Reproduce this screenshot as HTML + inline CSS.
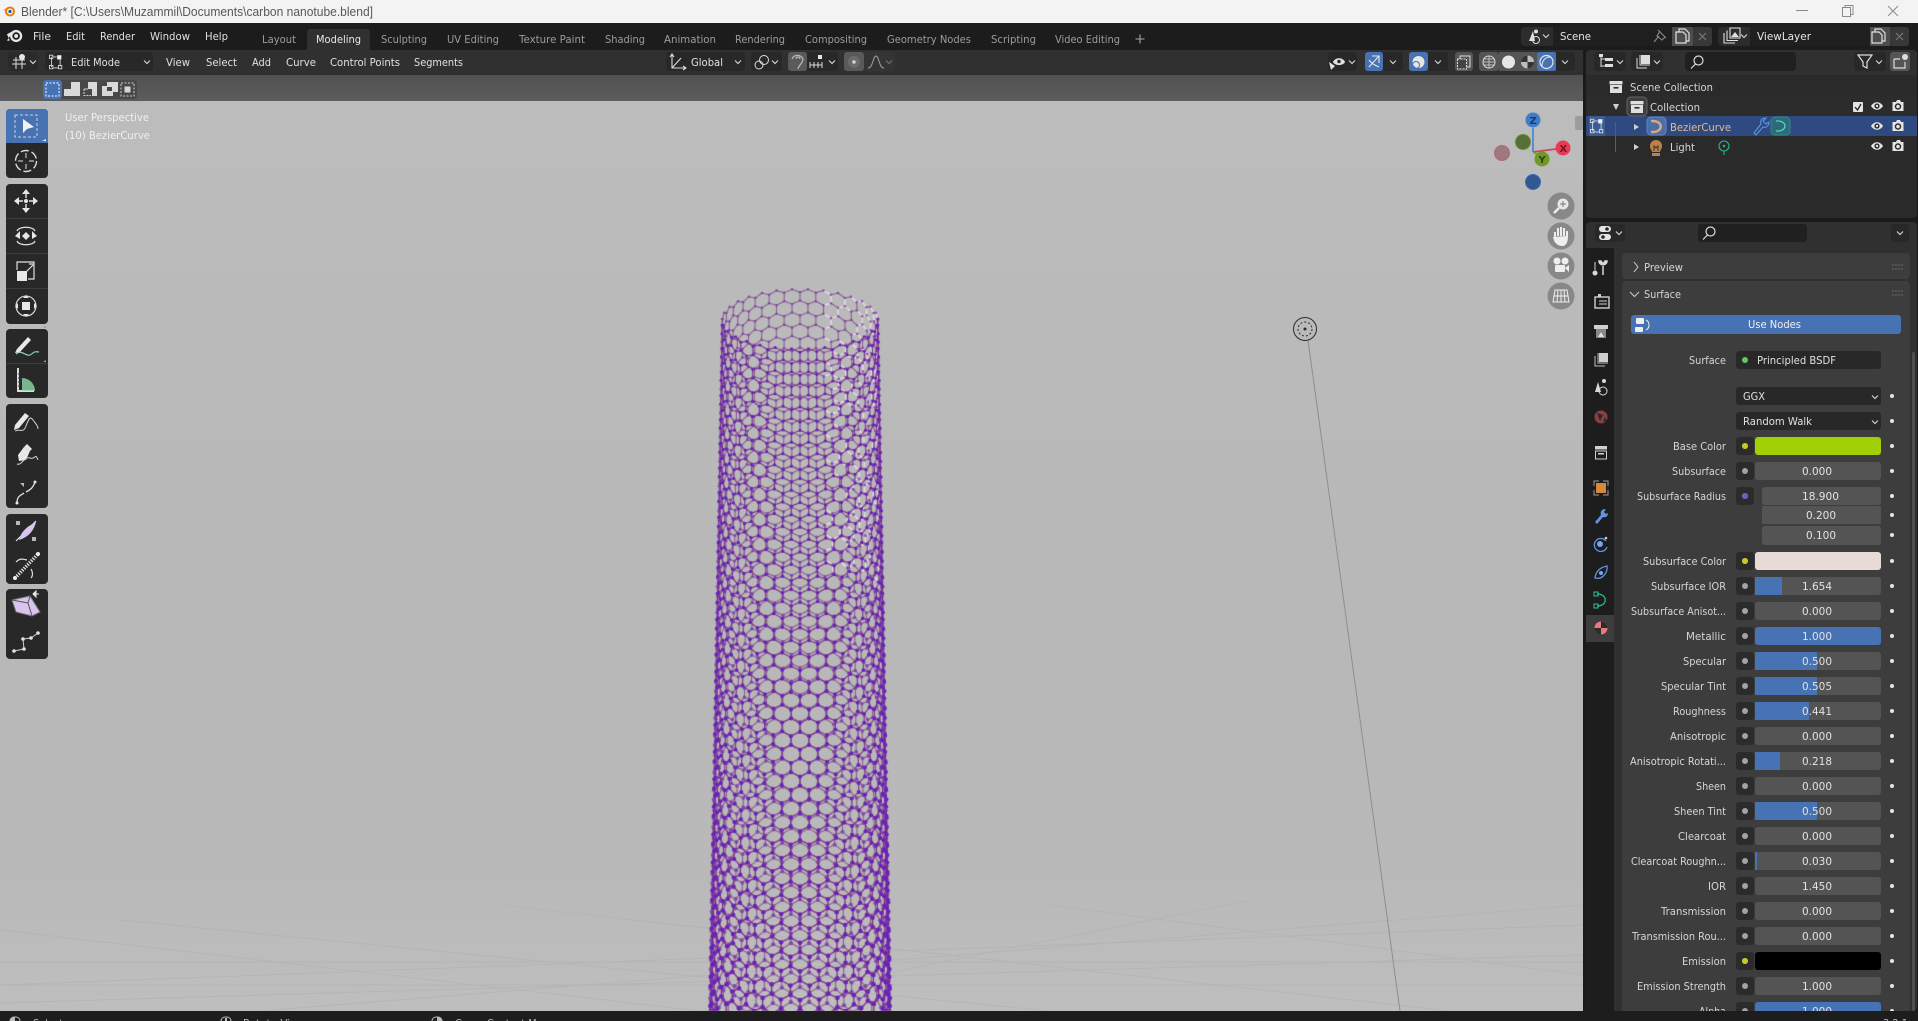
<!DOCTYPE html>
<html><head><meta charset="utf-8"><title>Blender</title>
<style>
html,body{margin:0;padding:0;background:#1d1d1d;width:1918px;height:1021px;overflow:hidden}
svg,canvas{position:absolute;left:0;top:0;display:block}
text{font-family:"DejaVu Sans","Liberation Sans",sans-serif;font-size:10.5px;fill:#d6d6d6}
.m{fill:#e0e0e0}.tab{fill:#9c9c9c}.v{fill:#e2e2e2;text-anchor:start}
.ic{fill:none;stroke:#e0e0e0;stroke-width:1.2}
.w{fill:#e6e6e6}
</style></head><body>
<svg width="1918" height="1021" viewBox="0 0 1918 1021">
<defs>
<linearGradient id="vp" x1="0" y1="0" x2="0" y2="1"><stop offset="0" stop-color="#bcbcbc"/><stop offset=".55" stop-color="#b8b8b8"/><stop offset=".85" stop-color="#b9b9b9"/><stop offset="1" stop-color="#bebebe"/></linearGradient>
<path id="chev" d="M-3-1.5 0 1.5 3-1.5" fill="none" stroke="#cfcfcf" stroke-width="1.2"/>
<g id="eye"><path d="M-6 0C-3-5 3-5 6 0 3 5-3 5-6 0Z" fill="#e4e4e4"/><circle r="2.6" fill="#2a2a2a"/><circle r="1.2" fill="#e4e4e4"/></g>
<g id="cam"><path d="M-5.5-4H-2L-1-6H2L3-4H5.5V5H-5.5Z" fill="#e4e4e4"/><circle cy=".5" r="3.2" fill="#2a2a2a"/><circle cy=".5" r="1.8" fill="#e4e4e4"/></g>
<g id="sk"><rect x="1736" y="-9" width="18" height="18" rx="3" fill="#2b2b2b"/><circle cx="1745" r="3" fill="#a3a3a3"/><circle cx="1892" r="2" fill="#e6e6e6"/></g>
<g id="sl"><use href="#sk"/><rect x="1755" y="-9" width="126" height="18" rx="3" fill="#545454"/></g>
<g id="dots" fill="#777"><circle cx="0" cy="-2" r=".7"/><circle cx="3" cy="-2" r=".7"/><circle cx="6" cy="-2" r=".7"/><circle cx="9" cy="-2" r=".7"/><circle cx="0" cy="2" r=".7"/><circle cx="3" cy="2" r=".7"/><circle cx="6" cy="2" r=".7"/><circle cx="9" cy="2" r=".7"/></g>
<g id="coll"><rect x="-6.5" y="-6" width="13" height="3.4" fill="#e0e0e0"/><path d="M-6-2H6V6H-6Z" fill="#e0e0e0"/><rect x="-2.5" y="0" width="5" height="1.6" fill="#2a2a2a"/></g>
<g id="cmode" fill="none" stroke="#dcdcdc" stroke-width="1"><path d="M-4-6V6M-2 7H4M6-3V5M-2-6H2"/><rect x="2.5" y="-8" width="5" height="5" fill="#eee" stroke="none"/><rect x="-6.5" y="-8" width="4" height="4"/><rect x="-6.5" y="4" width="4" height="4"/><rect x="4" y="4" width="4" height="4"/></g>
<g id="curve" fill="none"><path d="M-3-6C7-6 7 6-3 6" stroke="#e0e0e0" stroke-width="1.4"/><rect x="-6" y="-8" width="4" height="4" stroke="#e0e0e0"/><rect x="-6" y="4" width="4" height="4" stroke="#e0e0e0"/></g>
<g id="mag" fill="none" stroke="#dcdcdc" stroke-width="1.2"><circle cx="1.5" cy="-1.5" r="4.5"/><path d="M-1.5 2-6 6.5"/></g>
</defs>

<!-- title bar -->
<rect width="1918" height="23" fill="#f3f3f3"/>
<g transform="translate(9,11.5)"><circle cx="1" cy="0" r="4" fill="none" stroke="#e87d0d" stroke-width="2"/><circle cx="1" r="1.6" fill="#265787"/><path d="M-6-1-1-4.5-2-1.5Z" fill="#e87d0d"/></g>
<text x="21" y="16" textLength="352" lengthAdjust="spacingAndGlyphs" style="font-family:'Liberation Sans',sans-serif;font-size:12.5px;fill:#585858">Blender* [C:\Users\Muzammil\Documents\carbon nanotube.blend]</text>
<path d="M1796 10.5H1808" stroke="#8a8a8a"/>
<path d="M1842.500 7.500h8v9h-8zM1845 7.500v-2h8v9h-2.500" fill="none" stroke="#8a8a8a"/>
<path d="M1888 6 1898 16M1898 6 1888 16" stroke="#8a8a8a"/>

<!-- top bar -->
<rect y="23" width="1918" height="27" fill="#1c1c1c"/>
<g transform="translate(15,36) scale(1.15)"><circle cx="1" cy="0" r="4.300" fill="none" stroke="#e6e6e6" stroke-width="2"/><circle cx="1" r="1.700" fill="#e6e6e6"/><path d="M-7-1.500-.5-5-1-2.500-5 1-7 4-4.500 4" fill="#e6e6e6"/></g>
<text class="m" x="33" y="40" textLength="18" lengthAdjust="spacingAndGlyphs">File</text>
<text class="m" x="66" y="40" textLength="19" lengthAdjust="spacingAndGlyphs">Edit</text>
<text class="m" x="100" y="40" textLength="35" lengthAdjust="spacingAndGlyphs">Render</text>
<text class="m" x="150" y="40" textLength="40" lengthAdjust="spacingAndGlyphs">Window</text>
<text class="m" x="205" y="40" textLength="23" lengthAdjust="spacingAndGlyphs">Help</text>
<path d="M307 50V32a3 3 0 0 1 3-3H367a3 3 0 0 1 3 3V50Z" fill="#303030"/>
<text class="tab" x="262" y="43" textLength="34" lengthAdjust="spacingAndGlyphs">Layout</text>
<text x="316" y="43" textLength="45" lengthAdjust="spacingAndGlyphs" style="fill:#e8e8e8">Modeling</text>
<text class="tab" x="381" y="43" textLength="46" lengthAdjust="spacingAndGlyphs">Sculpting</text>
<text class="tab" x="447" y="43" textLength="52" lengthAdjust="spacingAndGlyphs">UV Editing</text>
<text class="tab" x="519" y="43" textLength="66" lengthAdjust="spacingAndGlyphs">Texture Paint</text>
<text class="tab" x="605" y="43" textLength="40" lengthAdjust="spacingAndGlyphs">Shading</text>
<text class="tab" x="664" y="43" textLength="52" lengthAdjust="spacingAndGlyphs">Animation</text>
<text class="tab" x="735" y="43" textLength="50" lengthAdjust="spacingAndGlyphs">Rendering</text>
<text class="tab" x="805" y="43" textLength="62" lengthAdjust="spacingAndGlyphs">Compositing</text>
<text class="tab" x="887" y="43" textLength="84" lengthAdjust="spacingAndGlyphs">Geometry Nodes</text>
<text class="tab" x="991" y="43" textLength="45" lengthAdjust="spacingAndGlyphs">Scripting</text>
<text class="tab" x="1055" y="43" textLength="65" lengthAdjust="spacingAndGlyphs">Video Editing</text>
<path d="M1140 34.500V43.500M1135.500 39H1144.500" stroke="#a8a8a8" stroke-width="1.100"/>

<!-- scene selector -->
<rect x="1521" y="27" width="191" height="19" rx="4" fill="#2c2c2c"/>
<rect x="1553" y="27" width="119" height="19" fill="#1f1f1f"/>
<rect x="1672" y="27" width="21" height="19" fill="#4d4d4d"/>
<rect x="1693" y="27" width="19" height="19" rx="3" fill="#383838"/>
<path d="M1529 41 1533 31 1535 41Z" fill="#e0e0e0"/><circle cx="1536" cy="31.500" r="2" fill="#e0e0e0"/><circle cx="1536" cy="40" r="3.500" fill="none" stroke="#e0e0e0"/>
<use href="#chev" x="1546" y="36"/>
<text class="w" x="1560" y="40" textLength="31" lengthAdjust="spacingAndGlyphs">Scene</text>
<path d="M1654 42 1659 36M1658 30 1666 38M1660 31 1657 36 1662 40 1665 37" fill="none" stroke="#888" stroke-width="1.100"/>
<path d="M1679 32v-3h6l4 4v8h-3M1676 32h7l3 3v8h-10z" fill="none" stroke="#e0e0e0" stroke-width="1.200"/>
<path d="M1699 33 1706 40M1706 33 1699 40" stroke="#777" stroke-width="1.200"/>

<rect x="1718" y="27" width="191" height="19" rx="4" fill="#2c2c2c"/>
<rect x="1750" y="27" width="120" height="19" fill="#1f1f1f"/>
<rect x="1870" y="27" width="20" height="19" fill="#4d4d4d"/>
<rect x="1890" y="27" width="19" height="19" rx="3" fill="#383838"/>
<path d="M1724 33v10h11M1727 30.500v10h11M1730 28h10v10h-10z" fill="none" stroke="#e0e0e0" stroke-width="1.100"/><path d="M1731 37 1735 32 1739 37Z" fill="#e0e0e0"/>
<use href="#chev" x="1744" y="36"/>
<text class="w" x="1757" y="40" textLength="54" lengthAdjust="spacingAndGlyphs">ViewLayer</text>
<path d="M1875 32v-3h6l4 4v8h-3M1872 32h7l3 3v8h-10z" fill="none" stroke="#e0e0e0" stroke-width="1.200"/>
<path d="M1896 33 1903 40M1903 33 1896 40" stroke="#777" stroke-width="1.200"/>

<!-- 3D view -->
<rect y="101" width="1583" height="910" fill="url(#vp)"/>
<g stroke="#adadad" stroke-width="1" fill="none" opacity=".45">
<path d="M0 985 1583 925M0 1003 1583 955M260 1011 1583 905M700 1011 1250 900M0 930 700 1011M120 920 1050 1011M500 905 1450 1011M1050 905 1583 975"/>
<path d="M0 962H1583M0 985H1583"/>
</g>
<path d="M1308 340 1400 1011" stroke="#8e8e8e" stroke-width="1" fill="none"/>
<circle cx="1305" cy="329" r="11.500" fill="none" stroke="#2c2c2c" stroke-width="1"/>
<circle cx="1305" cy="329" r="7" fill="none" stroke="#2c2c2c" stroke-width="1" stroke-dasharray="2 2"/>
<circle cx="1305" cy="329" r="1.500" fill="#2c2c2c"/>

<text x="65" y="121" textLength="84" lengthAdjust="spacingAndGlyphs" style="fill:#f0f0f0">User Perspective</text>
<text x="65" y="139" textLength="85" lengthAdjust="spacingAndGlyphs" style="fill:#f0f0f0">(10) BezierCurve</text>

<!-- header 3D -->
<rect y="50" width="1583" height="25" fill="#303030"/>
<linearGradient id="ts" x1="0" y1="0" x2="0" y2="1"><stop offset="0" stop-color="#515151"/><stop offset="1" stop-color="#5c5c5c"/></linearGradient>
<rect y="75" width="1583" height="26" fill="url(#ts)"/>
<rect x="8" y="52" width="30" height="19" rx="4" fill="#2a2a2a"/>
<path d="M12 64H26M13 60H25M16 57V69M22 57V69" stroke="#dcdcdc"/><circle cx="22" cy="57" r="3" fill="#e6e6e6"/>
<use href="#chev" x="33" y="62"/>
<rect x="45" y="52" width="108" height="19" rx="4" fill="#282828"/>
<use href="#cmode" transform="translate(55,62) scale(.85)"/>
<text class="m" x="71" y="66" textLength="49" lengthAdjust="spacingAndGlyphs">Edit Mode</text>
<use href="#chev" x="147" y="62"/>
<text class="m" x="166" y="66" textLength="24" lengthAdjust="spacingAndGlyphs">View</text>
<text class="m" x="206" y="66" textLength="31" lengthAdjust="spacingAndGlyphs">Select</text>
<text class="m" x="252" y="66" textLength="19" lengthAdjust="spacingAndGlyphs">Add</text>
<text class="m" x="286" y="66" textLength="30" lengthAdjust="spacingAndGlyphs">Curve</text>
<text class="m" x="330" y="66" textLength="70" lengthAdjust="spacingAndGlyphs">Control Points</text>
<text class="m" x="414" y="66" textLength="49" lengthAdjust="spacingAndGlyphs">Segments</text>

<rect x="666" y="52" width="79" height="19" rx="4" fill="#282828"/>
<path d="M672 55V68H685M672 68 681 58M670 57 672 54 674 57M683 66 686 68 683 70" fill="none" stroke="#dcdcdc" stroke-width="1.100"/>
<text class="m" x="691" y="66" textLength="32" lengthAdjust="spacingAndGlyphs">Global</text>
<use href="#chev" x="738" y="62"/>
<rect x="751" y="52" width="31" height="19" rx="4" fill="#282828"/>
<circle cx="759" cy="65" r="4" fill="none" stroke="#dcdcdc"/><circle cx="764" cy="60" r="4.500" fill="none" stroke="#dcdcdc"/>
<use href="#chev" x="775" y="62"/>
<rect x="788" y="52" width="19" height="19" rx="3" fill="#5a5a5a"/>
<path d="M792 59a6 6 0 0 1 11 0c0 4-5 7-5 10M796 59a2 2 0 0 1 4 0" fill="none" stroke="#bcbcbc" stroke-width="1.200"/>
<rect x="807" y="52" width="31" height="19" rx="3" fill="#282828"/>
<path d="M810 62V68M814 62V68M818 62V68M822 62V68M810 65H822" stroke="#dcdcdc"/><rect x="818" y="55" width="4" height="4" fill="#e6e6e6"/>
<use href="#chev" x="832" y="62"/>
<rect x="844" y="52" width="20" height="19" rx="3" fill="#5a5a5a"/><circle cx="854" cy="62" r="6" fill="#6c6c6c"/><circle cx="854" cy="62" r="1.700" fill="#d8d8d8"/>
<rect x="864" y="52" width="31" height="19" rx="3" fill="#343434"/>
<path d="M868 68C873 68 873 56 876 56S879 68 884 68" fill="none" stroke="#9a9a9a" stroke-width="1.100"/>
<use href="#chev" x="889" y="62" opacity=".4"/>

<!-- select mode -->
<rect x="43" y="80" width="94" height="19" rx="3" fill="#484848"/>
<rect x="43" y="80" width="19" height="19" rx="3" fill="#4772b3"/>
<rect x="46" y="83" width="13" height="13" fill="none" stroke="#fff" stroke-dasharray="2 1.500"/>
<path d="M71 82H80V96H64V89H71Z" fill="#d8d8d8"/>
<path d="M88 82H97V96H92V89H88Z" fill="#d8d8d8"/><path d="M84 89V95.500H91" fill="none" stroke="#cfcfcf" stroke-dasharray="2 1"/><path d="M84 89H88" stroke="#cfcfcf"/>
<path d="M102 86H107V82H118V92H113V96H102ZM107 87V91H112V87Z" fill="#d8d8d8" fill-rule="evenodd"/>
<rect x="121" y="83" width="13" height="13" fill="none" stroke="#cfcfcf" stroke-dasharray="2 1.500"/><rect x="124.500" y="86.500" width="6" height="6" fill="#d8d8d8"/>

<!-- header right -->
<rect x="1328" y="52" width="29" height="19" rx="4" fill="#282828"/>
<path d="M1333 62C1335 57 1343 57 1345 62 1343 66 1335 66 1333 62Z" fill="#e0e0e0"/><circle cx="1339" cy="61.500" r="1.700" fill="#282828"/><path d="M1329 62 1335 66 1331 70Z" fill="#e0e0e0"/>
<use href="#chev" x="1352" y="62"/>
<rect x="1365" y="52" width="18" height="19" rx="3" fill="#4772b3"/>
<path d="M1369 67 1379 56M1372 56H1379V63M1369 60C1372 64 1375 65 1379 67" fill="none" stroke="#e8e8e8" stroke-width="1.100"/>
<rect x="1383" y="52" width="20" height="19" rx="3" fill="#282828"/><use href="#chev" x="1393" y="62"/>
<rect x="1409" y="52" width="19" height="19" rx="3" fill="#4772b3"/>
<circle cx="1418.500" cy="62" r="6" fill="#e6e6e6"/><circle cx="1416" cy="65" r="3.500" fill="none" stroke="#4772b3"/>
<rect x="1428" y="52" width="20" height="19" rx="3" fill="#282828"/><use href="#chev" x="1438" y="62"/>
<rect x="1455" y="52" width="18" height="19" rx="3" fill="#555"/>
<rect x="1460" y="56" width="10" height="11" fill="none" stroke="#dcdcdc"/><rect x="1457.500" y="59" width="9" height="10" fill="#444" stroke="#dcdcdc" stroke-dasharray="2 1"/>
<rect x="1479" y="52" width="96" height="19" rx="4" fill="#282828"/>
<rect x="1479" y="52" width="20" height="19" rx="3" fill="#555"/>
<circle cx="1489" cy="62" r="6" fill="none" stroke="#dcdcdc"/><path d="M1483 62H1495M1489 56V68M1484 59H1494M1484 65H1494" stroke="#dcdcdc" stroke-width=".7"/>
<rect x="1499" y="52" width="19" height="19" fill="#555"/><circle cx="1508.500" cy="62" r="6.500" fill="#e6e6e6"/>
<rect x="1518" y="52" width="19" height="19" fill="#555"/><circle cx="1527.500" cy="62" r="6.500" fill="#bdbdbd"/><path d="M1527.500 62H1534a6.500 6.500 0 0 1-6.500 6.500Z" fill="#333"/><path d="M1527.500 55.500V62H1521a6.500 6.500 0 0 1 6.500-6.500Z" fill="#333"/>
<rect x="1537" y="52" width="19" height="19" rx="2" fill="#4772b3"/><circle cx="1546.500" cy="62" r="6.500" fill="none" stroke="#e6e6e6" stroke-width="1.200"/><path d="M1542 66C1542 60 1546 57 1550 57" stroke="#e6e6e6" fill="none"/>
<use href="#chev" x="1565" y="62"/>

<!-- toolbar -->
<g>
<rect x="6" y="109" width="42" height="69" rx="4" fill="#282828"/>
<path d="M6 143V113a4 4 0 0 1 4-4H44a4 4 0 0 1 4 4V143Z" fill="#4772b3"/>
<rect x="15" y="115" width="22" height="22" fill="none" stroke="#e8e8e8" stroke-dasharray="3 2" opacity=".8"/>
<path d="M23 119V133L27 129 34 127Z" fill="#f2f2f2"/>
<path d="M46 139 42 141H46Z" fill="#cfe"/>
<circle cx="26" cy="161" r="10.500" fill="none" stroke="#e8d8d8" stroke-width="1.400" stroke-dasharray="8 3"/>
<path d="M26 153V158M26 164V169M18 161H23M29 161H34" stroke="#e0e0e0"/>

<rect x="6" y="184" width="42" height="140" rx="4" fill="#282828"/>
<path d="M6 218.500H48M6 253.500H48M6 288.500H48M6 363.500H48M6 438.500H48M6 473.500H48M6 548.500H48M6 623.500H48" stroke="#3c3c3c"/>
<g fill="#e6e6e6"><path d="M26 189 30 194H22ZM26 213 22 208H30ZM14 201 19 197V205ZM38 201 33 197V205Z"/><circle cx="26" cy="201" r="2"/><path d="M25.300 194H26.700V198H25.300ZM25.300 204H26.700V208H25.300ZM19 200.300H23V201.700H19ZM29 200.300H33V201.700H29Z"/></g>
<path d="M17 231C19 226 33 226 35 231M17 241C19 246 33 246 35 241" fill="none" stroke="#e0e0e0" stroke-width="1.300"/>
<path d="M15 236 20 231 20 239ZM37 236 32 231 32 239Z" fill="#e6e6e6"/><path d="M26 232 30 236 26 240 22 236Z" fill="#e6e6e6"/>
<rect x="17" y="271" width="10" height="10" fill="#e8e8e8"/><path d="M17 270V262H34V279H28M26 272 33 265M29 264H34V269" fill="none" stroke="#e0e0e0" stroke-width="1.200"/>
<circle cx="26" cy="306" r="10" fill="none" stroke="#e0e0e0" stroke-width="1.100"/><rect x="22" y="302" width="8" height="8" fill="#e8e8e8"/><path d="M26 295 29 298H23ZM26 317 23 314H29ZM15 306 18 303V309ZM37 306 34 303V309Z" fill="#e6e6e6"/>

<rect x="6" y="329" width="42" height="69" rx="4" fill="#282828"/>
<path d="M6 363.500H48" stroke="#3c3c3c"/>
<path d="M17 349 28 337 31 340 20 352 15 353Z" fill="#e8e8e8"/>
<path d="M16 354C22 349 26 357 30 355S33 351 39 352" fill="none" stroke="#8fd0b0" stroke-width="1.200"/>
<path d="M46 360 43 362H46ZM46 326 43 328H46Z" fill="#999"/>
<path d="M18 368V391H34" fill="none" stroke="#ddd" stroke-width="2"/><path d="M18 374H21M18 378H21M18 382H21M18 386H21" stroke="#333"/>
<path d="M22 391V378A13 13 0 0 1 35 391Z" fill="#8fd8a8" opacity=".8"/>

<rect x="6" y="404" width="42" height="104" rx="4" fill="#282828"/>
<path d="M15 425 25 413 29 416 19 428 14 430Z" fill="#e8e8e8"/>
<path d="M15 431C20 428 23 434 26 426S30 416 33 420 38 426 38 429" fill="none" stroke="#cfd8d0" stroke-width="1"/>
<path d="M18 455 24 447 30 451 26 460 19 461Z" fill="#e8e8e8"/><path d="M24 447 27 444 32 449 30 451" fill="#e8e8e8"/>
<path d="M17 464C22 466 24 456 30 458S35 452 38 460" fill="none" stroke="#cfd8d0" stroke-width="1"/>
<path d="M17 503C17 495 22 495 24 493M26 492C30 490 33 488 35 482" fill="none" stroke="#e0e0e0" stroke-width="1.300"/><circle cx="17" cy="503" r="1.500" fill="#e8e8e8"/><circle cx="35" cy="482" r="1.500" fill="#cfe8d8"/><path d="M20 483 24 483 24 487Z" fill="#8fd0b0"/>

<rect x="6" y="514" width="42" height="70" rx="4" fill="#282828"/>
<path d="M16 541 36 521" stroke="#e0e0e0" stroke-width="1.200"/><path d="M19 540C21 532 26 527 36 522 34 530 29 537 19 540Z" fill="#d8c4ee"/>
<rect x="16" y="521" width="4" height="4" fill="#b8b8b8"/><rect x="32" y="537" width="4" height="4" fill="#b8b8b8"/>
<path d="M15 578 38 554" stroke="#e8e8e8" stroke-width="3.500" stroke-dasharray="1.300 1.300"/><circle cx="15" cy="578" r="2" fill="#eee"/><circle cx="38" cy="554" r="2" fill="#eee"/>
<path d="M16 562C20 558 23 559 27 560M31 569C33 572 33 576 31 578" fill="none" stroke="#ddd" stroke-width="1.200"/>

<rect x="6" y="589" width="42" height="70" rx="4" fill="#282828"/>
<path d="M12 600 30 596 40 612 32 616 16 612Z" fill="#d8c4ee" stroke="#777"/><path d="M30 596 28 603 32 616M12 600 28 603" stroke="#555" fill="none"/>
<path d="M33 594H39M33 594 36 591V597Z" stroke="#e8e8e8" fill="#e8e8e8"/>
<path d="M14 651 24 649 23 639 31 638 38 633" fill="none" stroke="#cfcfcf" stroke-width="1"/>
<g fill="#e2e2e2"><circle cx="14" cy="651" r="1.800"/><circle cx="24" cy="649" r="1.800"/><circle cx="23" cy="639" r="1.800"/><circle cx="31" cy="638" r="1.800"/><circle cx="38" cy="633" r="1.800"/></g>
</g>

<!-- gizmo -->
<path d="M1533 152V128" stroke="#4a8ad4" stroke-width="1.800"/>
<path d="M1533 152 1556 149" stroke="#c8485a" stroke-width="1.800"/>
<path d="M1533 152 1540 156" stroke="#7da02e" stroke-width="1.800"/>
<circle cx="1533" cy="182" r="7.500" fill="#30588f" stroke="#3d6eaa"/>
<circle cx="1502" cy="153" r="7.500" fill="#a0787f" stroke="#b06a78"/>
<circle cx="1523" cy="142" r="7.500" fill="#576f36" stroke="#6c8c30"/>
<circle cx="1533" cy="120" r="7.500" fill="#3f7dcb"/>
<circle cx="1563" cy="148" r="7.500" fill="#e83a53"/>
<circle cx="1542" cy="159" r="7.500" fill="#6f9a26"/>
<text x="1529.500" y="124" style="font-size:10px;fill:#173a66;font-weight:bold">Z</text>
<text x="1559.500" y="152" style="font-size:10px;fill:#701822;font-weight:bold">X</text>
<text x="1538.500" y="163" style="font-size:10px;fill:#2f4610;font-weight:bold">Y</text>

<rect x="1575" y="116" width="8" height="14" rx="2" fill="#9c9c9c"/>
<g fill="#888">
<circle cx="1561" cy="206" r="13.500"/><circle cx="1561" cy="236" r="13.500"/><circle cx="1561" cy="266" r="13.500"/><circle cx="1561" cy="296" r="13.500"/>
</g>
<circle cx="1563" cy="204" r="5.500" fill="#e8e8e8"/><path d="M1563 201V207M1560 204H1566" stroke="#777"/><path d="M1559 208 1554 213" stroke="#eee" stroke-width="2.500"/>
<path d="M1555 238V232M1558 236V228M1561 236V227M1564 236V228M1567 237V231M1554 237C1555 243 1559 245 1562 245 1566 245 1567 241 1567 236" fill="#eee" stroke="#eee" stroke-width="2"/>
<circle cx="1557" cy="261" r="3.500" fill="#eee"/><circle cx="1565" cy="261" r="3.500" fill="#eee"/><rect x="1555" y="265" width="10" height="7" rx="1" fill="#eee"/><path d="M1565 268 1569 265V272Z" fill="#eee"/>
<path d="M1555 290H1567L1569 302H1553ZM1561 290V302M1554 296H1568M1558 290 1557 302M1564 290 1565 302" fill="none" stroke="#eee" stroke-width="1"/>

<!-- outliner -->
<rect x="1583" y="50" width="335" height="961" fill="#1a1a1a"/>
<rect x="1586" y="50" width="331" height="168" rx="4" fill="#2a2a2a"/>
<path d="M1586 75V54a4 4 0 0 1 4-4H1913a4 4 0 0 1 4 4V75Z" fill="#303030"/>
<rect x="1586" y="96" width="331" height="20" fill="#2c2c2c"/>
<rect x="1586" y="116" width="331" height="20" fill="#2f4a80"/>
<rect x="1594" y="52" width="32" height="19" rx="4" fill="#282828"/>
<path d="M1601 56V67M1601 59H1605M1601 66H1605" stroke="#ddd"/><rect x="1599" y="54" width="4" height="3" fill="#ddd"/><rect x="1605" y="58" width="8" height="3" fill="#ddd"/><rect x="1605" y="64" width="8" height="3" fill="#ddd"/>
<use href="#chev" x="1620" y="62"/>
<rect x="1631" y="52" width="32" height="19" rx="4" fill="#282828"/>
<path d="M1637 58v10h10M1640 55v10h10" fill="none" stroke="#ddd"/><rect x="1641" y="55" width="9" height="9" fill="#ddd"/>
<use href="#chev" x="1657" y="62"/>
<rect x="1685" y="52" width="111" height="19" rx="4" fill="#202020"/>
<use href="#mag" x="1697" y="62"/>
<rect x="1854" y="52" width="32" height="19" rx="4" fill="#282828"/>
<path d="M1858 55H1872L1867 62V68L1863 66V62Z" fill="none" stroke="#ddd" stroke-width="1.200"/><use href="#chev" x="1879" y="62"/>
<rect x="1890" y="52" width="20" height="19" rx="3" fill="#555"/>
<path d="M1894 59H1900M1894 59V68H1905V62" fill="none" stroke="#ddd" stroke-width="1.200"/><circle cx="1905" cy="57" r="3" fill="#ddd"/>

<use href="#coll" x="1616" y="87"/>
<text x="1630" y="91" textLength="83" lengthAdjust="spacingAndGlyphs">Scene Collection</text>
<path d="M1613 104H1619L1616 110Z" fill="#cfcfcf"/>
<rect x="1627" y="97" width="20" height="19" rx="4" fill="#3f3f3f" stroke="#666"/>
<use href="#coll" x="1637" y="107"/>
<text x="1650" y="111" textLength="50" lengthAdjust="spacingAndGlyphs">Collection</text>
<rect x="1853" y="102" width="10" height="10" rx="1" fill="#e4e4e4"/><path d="M1855 107 1857.500 110 1861 104" fill="none" stroke="#222" stroke-width="1.300"/>
<use href="#eye" x="1877" y="106"/><use href="#cam" x="1898" y="106"/>

<rect x="1589" y="116" width="16" height="20" fill="#3a5c99"/>
<g transform="translate(1596,126) scale(.85)" fill="none" stroke="#dcdcdc" stroke-width="1"><path d="M-4-6V6M-2 7H4M6-3V5M-2-6H2"/><rect x="2.500" y="-8" width="5" height="5" fill="#eee" stroke="none"/><rect x="-6.500" y="-8" width="4" height="4"/><rect x="-6.500" y="4" width="4" height="4"/><rect x="4" y="4" width="4" height="4"/></g>
<path d="M1615.500 122V152" stroke="#5e5e5e"/>
<path d="M1634 124V130L1639 127Z" fill="#cfcfcf"/>
<rect x="1647" y="117" width="19" height="18" rx="4" fill="#4a6ea8" stroke="#6284bc"/>
<path d="M1651 121C1664 120 1664 133 1651 132" fill="none" stroke="#dca77a" stroke-width="2.500"/>
<text x="1670" y="131" textLength="61" lengthAdjust="spacingAndGlyphs" style="fill:#e0bb8a">BezierCurve</text>
<path d="M1754 133 1761 124C1760 120 1762 118 1766 118L1763 121 1766 124 1769 122C1769 126 1766 128 1763 127L1756 135Z" fill="none" stroke="#5e94e0" stroke-width="1.100"/>
<rect x="1771" y="117" width="19" height="18" rx="4" fill="#2f6a7a" stroke="#2f8a8a"/>
<path d="M1776 121C1788 120 1788 132 1776 131" fill="none" stroke="#4ee0c0" stroke-width="1.200"/>
<use href="#eye" x="1877" y="126"/><use href="#cam" x="1898" y="126"/>

<path d="M1634 144V150L1639 147Z" fill="#cfcfcf"/>
<path d="M1656 140a6 6 0 0 1 6 6c0 3-2 4-2 6H1652c0-2-2-3-2-6a6 6 0 0 1 6-6Z" fill="#c08048"/><rect x="1652" y="153" width="8" height="3" fill="#c08048"/><path d="M1654 151V146L1656 148 1658 146V151" fill="none" stroke="#333"/>
<text x="1670" y="151" textLength="25" lengthAdjust="spacingAndGlyphs">Light</text>
<circle cx="1724" cy="146" r="5" fill="none" stroke="#29b58a" stroke-width="1.100"/><circle cx="1724" cy="146" r="1.200" fill="#29b58a"/><path d="M1724 151V155" stroke="#29b58a"/>
<use href="#eye" x="1877" y="146"/><use href="#cam" x="1898" y="146"/>

<!-- properties -->
<rect x="1586" y="222" width="331" height="789" rx="4" fill="#303030"/>
<rect x="1586" y="248" width="28" height="763" fill="#1d1d1d"/>
<rect x="1595" y="224" width="30" height="18" rx="4" fill="#282828"/>
<rect x="1599" y="226" width="12" height="6" rx="3" fill="#e4e4e4"/><rect x="1599" y="234" width="12" height="6" rx="3" fill="#e4e4e4"/><circle cx="1607" cy="229" r="1.800" fill="#282828"/><circle cx="1603" cy="237" r="1.800" fill="#282828"/>
<use href="#chev" x="1619" y="233"/>
<rect x="1698" y="224" width="109" height="18" rx="3" fill="#202020"/>
<use href="#mag" x="1709" y="233"/>
<rect x="1891" y="224" width="18" height="18" rx="3" fill="#282828"/><use href="#chev" x="1900" y="233"/>

<g>
<path d="M1595 262V270" stroke="#d8d8d8"/><circle cx="1595" cy="273" r="2.500" fill="#d8d8d8"/>
<path d="M1603 275V266M1599 261C1599 266 1607 266 1607 261L1605 261 1603 264 1601 261Z" fill="#d8d8d8" stroke="#d8d8d8" stroke-width="1.500"/>
<rect x="1595" y="297" width="14" height="11" fill="none" stroke="#cfcfcf" stroke-width="1.400"/><rect x="1598" y="294" width="3" height="3" fill="#cfcfcf"/><path d="M1599 301H1607M1599 304H1607" stroke="#cfcfcf"/>
<rect x="1594" y="325" width="14" height="4" fill="#cfcfcf"/><path d="M1596 329H1606V338H1596Z" fill="#888"/><path d="M1598 337 1601 332 1604 337Z" fill="#e0e0e0"/>
<path d="M1595 356v10h10M1598 353v10h10" fill="none" stroke="#bdbdbd"/><rect x="1599" y="353" width="9" height="9" fill="#cfcfcf"/>
<path d="M1595 392 1598 382 1601 392Z" fill="#d8d8d8"/><circle cx="1604" cy="381" r="2" fill="#d8d8d8"/><circle cx="1603" cy="391" r="4" fill="none" stroke="#d8d8d8"/>
<circle cx="1601" cy="417" r="6.500" fill="#8a3f45"/><path d="M1597 413 1603 415 1600 421ZM1605 417 1607 421 1603 422Z" fill="#2a2a2a"/>
<rect x="1595" y="446" width="12" height="3.500" fill="#d0d0d0"/><rect x="1595.500" y="451" width="11" height="8" fill="none" stroke="#d0d0d0"/><rect x="1598" y="453" width="6" height="1.500" fill="#d0d0d0"/>
<rect x="1596" y="483" width="10" height="10" fill="#d8873f"/><path d="M1594 486V481H1599M1603 481H1608V486M1608 490V495H1603M1599 495H1594V490" fill="none" stroke="#9c9c9c"/>
<path d="M1595 522 1601 515C1600 511 1602 509 1606 509L1604 512 1606 514 1608 513C1608 516 1606 518 1603 517L1597 524Z" fill="#5e94e0"/>
<circle cx="1600" cy="544" r="3" fill="#7aa4e8"/><path d="M1606 541A6.500 6.500 0 1 0 1607 547" fill="none" stroke="#5e94e0" stroke-width="1.300"/><circle cx="1606" cy="538" r="1.300" fill="#cfcfcf"/>
<path d="M1595 578C1596 570 1602 567 1607 566 1608 573 1602 580 1595 578Z" fill="none" stroke="#5e94e0" stroke-width="1.300"/><circle cx="1601" cy="573" r="2" fill="#7aa4e8"/>
<path d="M1597 594C1608 594 1608 606 1597 606" fill="none" stroke="#26c29a" stroke-width="1.200"/><rect x="1594" y="592" width="4" height="4" fill="none" stroke="#26c29a"/><rect x="1594" y="604" width="4" height="4" fill="none" stroke="#26c29a"/>
<rect x="1586" y="615" width="28" height="27" fill="#3d3d3d"/>
<circle cx="1601" cy="628" r="6.500" fill="#e77a80"/><path d="M1601 628V621.500A6.500 6.500 0 0 1 1607.500 628Z" fill="#2c2c2c"/><path d="M1601 628H1594.500A6.500 6.500 0 0 0 1601 634.500Z" fill="#2c2c2c"/>
</g>

<rect x="1622" y="253" width="288" height="26" rx="4" fill="#3d3d3d"/>
<path d="M1634 262 1638 267 1634 272" fill="none" stroke="#cfcfcf"/>
<text x="1644" y="271" textLength="39" lengthAdjust="spacingAndGlyphs">Preview</text>
<use href="#dots" x="1893" y="267"/>
<rect x="1622" y="281" width="288" height="740" rx="4" fill="#3d3d3d"/>
<path d="M1630 292 1634.500 296.500 1639 292" fill="none" stroke="#cfcfcf"/>
<text x="1644" y="298" textLength="37" lengthAdjust="spacingAndGlyphs">Surface</text>
<use href="#dots" x="1893" y="293"/>
<rect x="1631" y="315" width="270" height="19" rx="3" fill="#4772b3"/>
<rect x="1636" y="318" width="8" height="6" rx="1" fill="#eee"/><rect x="1635" y="327" width="8" height="5" rx="1" fill="#eee"/><path d="M1646 320C1650 322 1650 328 1646 330" fill="none" stroke="#eee"/>
<text x="1748" y="328" textLength="53" lengthAdjust="spacingAndGlyphs" style="fill:#f0f0f0">Use Nodes</text>
<rect x="1912" y="352" width="3" height="659" rx="1.500" fill="#4f4f4f"/>

<text x="1689" y="364" textLength="37" lengthAdjust="spacingAndGlyphs">Surface</text>
<rect x="1736" y="351" width="145" height="18" rx="3" fill="#282828"/><circle cx="1745" cy="360" r="3" fill="#63c763"/>
<text class="m" x="1757" y="364" textLength="79" lengthAdjust="spacingAndGlyphs">Principled BSDF</text>

<rect x="1736" y="387" width="145" height="18" rx="3" fill="#282828"/>
<text class="m" x="1743" y="400" textLength="22" lengthAdjust="spacingAndGlyphs">GGX</text>
<use href="#chev" x="1875" y="397"/><circle cx="1892" cy="396" r="2" fill="#e6e6e6"/>
<rect x="1736" y="412" width="145" height="18" rx="3" fill="#282828"/>
<text class="m" x="1743" y="425" textLength="69" lengthAdjust="spacingAndGlyphs">Random Walk</text>
<use href="#chev" x="1875" y="422"/><circle cx="1892" cy="421" r="2" fill="#e6e6e6"/>

<!-- Base color -->
<use href="#sk" y="446"/><circle cx="1745" cy="446" r="3" fill="#c7c729"/>
<rect x="1755" y="437" width="126" height="18" rx="3" fill="#a1cf05"/>
<text x="1673" y="450" textLength="53" lengthAdjust="spacingAndGlyphs">Base Color</text>

<use href="#sl" y="471"/>
<text x="1672" y="475" textLength="54" lengthAdjust="spacingAndGlyphs">Subsurface</text>
<text class="v" x="1802" y="475" textLength="30" lengthAdjust="spacingAndGlyphs">0.000</text>

<use href="#sk" y="496"/><circle cx="1745" cy="496" r="3" fill="#6363c7"/>
<rect x="1762" y="487" width="119" height="18" rx="3" fill="#545454"/>
<text x="1637" y="500" textLength="89" lengthAdjust="spacingAndGlyphs">Subsurface Radius</text>
<text class="v" x="1802" y="500" textLength="37" lengthAdjust="spacingAndGlyphs">18.900</text>
<rect x="1762" y="506" width="119" height="18" rx="1" fill="#545454"/><circle cx="1892" cy="515" r="2" fill="#e6e6e6"/>
<text class="v" x="1806" y="519" textLength="30" lengthAdjust="spacingAndGlyphs">0.200</text>
<rect x="1762" y="526" width="119" height="19" rx="3" fill="#545454"/><circle cx="1892" cy="535" r="2" fill="#e6e6e6"/>
<text class="v" x="1806" y="539" textLength="30" lengthAdjust="spacingAndGlyphs">0.100</text>

<use href="#sk" y="561"/><circle cx="1745" cy="561" r="3" fill="#c7c729"/>
<rect x="1755" y="552" width="126" height="18" rx="3" fill="#e8dad7"/>
<text x="1643" y="565" textLength="83" lengthAdjust="spacingAndGlyphs">Subsurface Color</text>

<use href="#sl" y="586"/><path d="M1755 577H1782V595H1755Z" fill="#4772b3"/>
<text x="1651" y="590" textLength="75" lengthAdjust="spacingAndGlyphs">Subsurface IOR</text>
<text class="v" x="1802" y="590" textLength="30" lengthAdjust="spacingAndGlyphs">1.654</text>

<use href="#sl" y="611"/>
<text x="1631" y="615" textLength="95" lengthAdjust="spacingAndGlyphs">Subsurface Anisot...</text>
<text class="v" x="1802" y="615" textLength="30" lengthAdjust="spacingAndGlyphs">0.000</text>

<use href="#sl" y="636"/><rect x="1755" y="627" width="126" height="18" rx="3" fill="#4772b3"/>
<text x="1686" y="640" textLength="40" lengthAdjust="spacingAndGlyphs">Metallic</text>
<text class="v" x="1802" y="640" textLength="30" lengthAdjust="spacingAndGlyphs">1.000</text>

<use href="#sl" y="661"/><path d="M1755 652H1817V670H1755Z" fill="#4772b3"/>
<text x="1683" y="665" textLength="43" lengthAdjust="spacingAndGlyphs">Specular</text>
<text class="v" x="1802" y="665" textLength="30" lengthAdjust="spacingAndGlyphs">0.500</text>

<use href="#sl" y="686"/><path d="M1755 677H1817V695H1755Z" fill="#4772b3"/>
<text x="1661" y="690" textLength="65" lengthAdjust="spacingAndGlyphs">Specular Tint</text>
<text class="v" x="1802" y="690" textLength="30" lengthAdjust="spacingAndGlyphs">0.505</text>

<use href="#sl" y="711"/><path d="M1755 702H1809V720H1755Z" fill="#4772b3"/>
<text x="1673" y="715" textLength="53" lengthAdjust="spacingAndGlyphs">Roughness</text>
<text class="v" x="1802" y="715" textLength="30" lengthAdjust="spacingAndGlyphs">0.441</text>

<use href="#sl" y="736"/>
<text x="1670" y="740" textLength="56" lengthAdjust="spacingAndGlyphs">Anisotropic</text>
<text class="v" x="1802" y="740" textLength="30" lengthAdjust="spacingAndGlyphs">0.000</text>

<use href="#sl" y="761"/><path d="M1755 752H1780V770H1755Z" fill="#4772b3"/>
<text x="1630" y="765" textLength="96" lengthAdjust="spacingAndGlyphs">Anisotropic Rotati...</text>
<text class="v" x="1802" y="765" textLength="30" lengthAdjust="spacingAndGlyphs">0.218</text>

<use href="#sl" y="786"/>
<text x="1696" y="790" textLength="30" lengthAdjust="spacingAndGlyphs">Sheen</text>
<text class="v" x="1802" y="790" textLength="30" lengthAdjust="spacingAndGlyphs">0.000</text>

<use href="#sl" y="811"/><path d="M1755 802H1817V820H1755Z" fill="#4772b3"/>
<text x="1674" y="815" textLength="52" lengthAdjust="spacingAndGlyphs">Sheen Tint</text>
<text class="v" x="1802" y="815" textLength="30" lengthAdjust="spacingAndGlyphs">0.500</text>

<use href="#sl" y="836"/>
<text x="1678" y="840" textLength="48" lengthAdjust="spacingAndGlyphs">Clearcoat</text>
<text class="v" x="1802" y="840" textLength="30" lengthAdjust="spacingAndGlyphs">0.000</text>

<use href="#sl" y="861"/><path d="M1755 852H1757V870H1755Z" fill="#4772b3"/>
<text x="1631" y="865" textLength="95" lengthAdjust="spacingAndGlyphs">Clearcoat Roughn...</text>
<text class="v" x="1802" y="865" textLength="30" lengthAdjust="spacingAndGlyphs">0.030</text>

<use href="#sl" y="886"/>
<text x="1708" y="890" textLength="18" lengthAdjust="spacingAndGlyphs">IOR</text>
<text class="v" x="1802" y="890" textLength="30" lengthAdjust="spacingAndGlyphs">1.450</text>

<use href="#sl" y="911"/>
<text x="1661" y="915" textLength="65" lengthAdjust="spacingAndGlyphs">Transmission</text>
<text class="v" x="1802" y="915" textLength="30" lengthAdjust="spacingAndGlyphs">0.000</text>

<use href="#sl" y="936"/>
<text x="1632" y="940" textLength="94" lengthAdjust="spacingAndGlyphs">Transmission Rou...</text>
<text class="v" x="1802" y="940" textLength="30" lengthAdjust="spacingAndGlyphs">0.000</text>

<use href="#sk" y="961"/><circle cx="1745" cy="961" r="3" fill="#c7c729"/>
<rect x="1755" y="952" width="126" height="18" rx="3" fill="#000"/>
<text x="1682" y="965" textLength="44" lengthAdjust="spacingAndGlyphs">Emission</text>

<use href="#sl" y="986"/>
<text x="1637" y="990" textLength="89" lengthAdjust="spacingAndGlyphs">Emission Strength</text>
<text class="v" x="1802" y="990" textLength="30" lengthAdjust="spacingAndGlyphs">1.000</text>

<use href="#sl" y="1011"/><rect x="1755" y="1002" width="126" height="18" rx="3" fill="#4772b3"/>
<text x="1699" y="1015" textLength="27" lengthAdjust="spacingAndGlyphs">Alpha</text>
<text class="v" x="1802" y="1015" textLength="30" lengthAdjust="spacingAndGlyphs">1.000</text>

<!-- status bar -->
<rect y="1011" width="1918" height="10" fill="#1d1d1d"/>
<rect x="10" y="1017" width="10" height="12" rx="4" fill="none" stroke="#bbb"/><path d="M10 1022V1021a4 4 0 0 1 5-4V1022Z" fill="#bbb"/>
<text x="33" y="1027" textLength="30" lengthAdjust="spacingAndGlyphs" style="fill:#b8b8b8">Select</text>
<rect x="221" y="1017" width="10" height="12" rx="4" fill="none" stroke="#bbb"/><rect x="225" y="1018" width="2" height="5" fill="#bbb"/>
<text x="243" y="1027" textLength="62" lengthAdjust="spacingAndGlyphs" style="fill:#b8b8b8">Rotate View</text>
<rect x="432" y="1017" width="10" height="12" rx="4" fill="none" stroke="#bbb"/><path d="M437 1017a4 4 0 0 1 5 4V1022H437Z" fill="#bbb"/>
<text x="455" y="1027" textLength="100" lengthAdjust="spacingAndGlyphs" style="fill:#b8b8b8">Curve Context Menu</text>
<text x="1883" y="1027" textLength="25" lengthAdjust="spacingAndGlyphs" style="fill:#b8b8b8">3.2.1</text>
</svg>
<canvas id="tube" width="1918" height="1021" style="pointer-events:none"></canvas>
<script>
(function(){
var c=document.getElementById('tube').getContext('2d');
c.beginPath();c.rect(0,101,1583,910);c.clip();
var n=60,rows=56,cx=800;
function P(i,j){
  var zig=((i+j)%2)?0:3.2;
  var v=j*11.5+j*j*0.03+zig*(1+j/80);
  var th=2*Math.PI*i/n;
  var z=Math.cos(th),s=Math.sin(th);
  var yy=319+v;
  var t=(yy-319)/692;
  var R=78+12*t;
  var b=30*(905-yy)/586;
  return {x:cx+R*s*(1+0.03*z),y:319+v*(1+0.045*z)+b*z,z:z,s:s,t:t};
}
function rnd(a,b){var v=Math.sin(a*12.9898+b*78.233)*43758.5453;return v-Math.floor(v);}
function bonds(front){
  for(var j=0;j<rows;j++)for(var i=0;i<n;i++){
    var a=P(i,j),k=[P(i+1,j)];
    if((i+j)%2==0&&j<rows-1)k.push(P(i,j+1));
    for(var q=0;q<k.length;q++){
      var b=k[q];
      if((a.z>=0)!=front)continue;
      var col=front?'#763480':'#7d4a86',w=front?1.25:1.1,al=front?0.9:0.8;
      if(!front&&a.s>0.35&&a.t<0.4&&rnd(i,j+q)>0.45){col='#efe6ea';w=1.2;al=.95;}
      if(front&&a.t>0.7){col='#7c2a78';w=1.35;al=.95;}
      c.globalAlpha=al;c.strokeStyle=col;c.lineWidth=w;
      c.beginPath();c.moveTo(a.x,a.y);c.lineTo(b.x,b.y);c.stroke();
    }
  }
}
function atoms(front){
  for(var j=0;j<rows;j++)for(var i=0;i<n;i++){
    var a=P(i,j);
    if((a.z>=0)!=front)continue;
    var r=(front?1.5:1.25)+(a.t*0.9);
    c.globalAlpha=front?1:.85;
    c.fillStyle=front?'#6a22b8':'#7a40ac';
    c.beginPath();c.arc(a.x,a.y,r,0,6.3);c.fill();
  }
}
bonds(false);atoms(false);bonds(true);atoms(true);
})();
</script>
</body></html>
